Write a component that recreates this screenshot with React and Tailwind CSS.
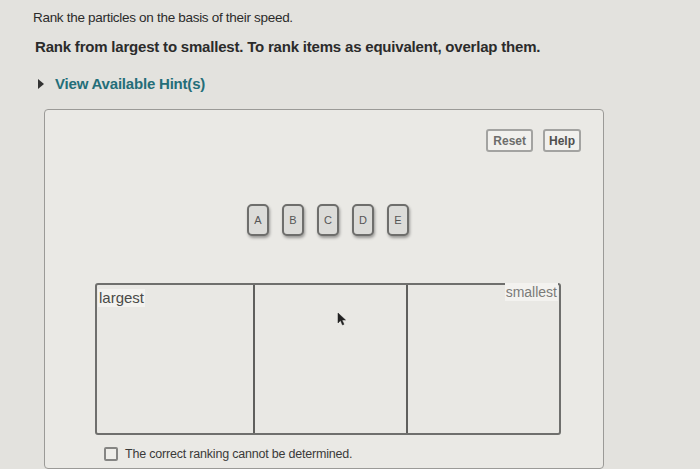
export default function App() {
  const tiles = ["A", "B", "C", "D", "E"];
  return (
    <div className="w-[700px] h-[469px] overflow-hidden bg-[#e3e2de] relative" style={{ fontFamily: '"Liberation Sans", Arial, sans-serif' }}>
      <div className="pl-[33px] pt-[9px]">
        <p className="text-[13.5px] leading-[18px] text-[#2b2b2b] tracking-[-0.3px]">Rank the particles on the basis of their speed.</p>
        <p className="mt-[11px] ml-[2px] text-[15px] leading-[18px] font-bold text-[#2b2b2b] tracking-[-0.2px]">Rank from largest to smallest. To rank items as equivalent, overlap them.</p>
        <div className="mt-[19px] ml-[4px] flex items-center gap-[10px]">
          <svg width="8" height="10" viewBox="0 0 8 10"><path d="M1 0 L7 5 L1 10 Z" fill="#333" /></svg>
          <span className="text-[15px] leading-[18px] font-bold text-[#246e79] tracking-[-0.2px]">View Available Hint(s)</span>
        </div>
      </div>
      <div className="absolute left-[44px] top-[109px] w-[560px] h-[360px] border border-[#9b9a97] rounded-[4px] bg-[#eae9e5]">
        <div className="flex justify-end gap-[10px] pr-[22px] pt-[19px]">
          <button className="h-[23px] px-[5px] border-2 border-[#a3a3a1] rounded-[3px] bg-[#f1f0ed] text-[12px] font-bold text-[#6d6d6b]">Reset</button>
          <button className="h-[23px] px-[4px] border-2 border-[#a3a3a1] rounded-[3px] bg-[#f1f0ed] text-[12px] font-bold text-[#4f4f4e]">Help</button>
        </div>
        <div className="flex justify-center gap-[13px] mt-[52px] pl-[8px]">
          {tiles.map((t) => (
            <div key={t} className="w-[22px] h-[32px] rounded-[5px] border-2 border-[#6e6e6c] bg-[#dcdcd9] shadow-[1px_2px_3px_rgba(0,0,0,0.35)] flex items-center justify-center text-[11px] text-[#555]">{t}</div>
          ))}
        </div>
        <div className="ml-[50px] mt-[47px] w-[466px] h-[152px] border-2 border-[#6f6f6d] rounded-[3px] grid grid-cols-[158px_153px_1fr] bg-[#e9e8e4]">
          <div className="border-r-2 border-[#5f5f5d] relative">
            <span className="absolute left-[1px] top-[4px] bg-[#f3f2ef] px-[1px] text-[15px] leading-[18px] text-[#4a4a48]">largest</span>
          </div>
          <div className="border-r-2 border-[#5f5f5d] relative">
            <svg className="absolute left-[82px] top-[27px]" width="10" height="14" viewBox="0 0 10 14"><path d="M1 1 L1 11 L3.5 8.5 L5.5 13 L7 12.3 L5 8 L8.5 8 Z" fill="#222" stroke="#222" strokeWidth="0.5" /></svg>
          </div>
          <div className="relative">
            <span className="absolute right-[1px] top-[-2px] bg-[#f3f2ef] px-[1px] text-[14px] leading-[18px] text-[#7b7b79]">smallest</span>
          </div>
        </div>
        <div className="ml-[59px] mt-[10px] flex items-center gap-[7px]">
          <div className="w-[14px] h-[14px] border-2 border-[#858583] rounded-[2px] bg-[#eeede9]"></div>
          <span className="text-[12.5px] text-[#3a3a39] tracking-[-0.2px]">The correct ranking cannot be determined.</span>
        </div>
      </div>
    </div>
  );
}
